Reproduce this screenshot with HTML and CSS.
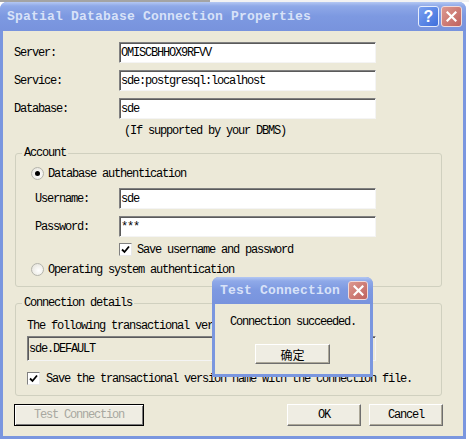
FILE: index.html
```html
<!DOCTYPE html>
<html lang="en">
<head>
    <meta charset="UTF-8">
    <meta name="viewport" content="width=device-width, initial-scale=1.0">
    <title>Spatial Database Connection Properties</title>
    <link rel="stylesheet" href="styles.css">
</head>
<body>
    <div class="desk-top"></div>
    <div class="window">
        <div class="titlebar">
            <span class="title">Spatial Database Connection Properties</span>
            <span class="cap-btn help">?</span>
            <span class="cap-btn close">
                <svg width="11" height="11" viewBox="0 0 11 11"><path d="M1.5 1.5 L9.5 9.5 M9.5 1.5 L1.5 9.5" stroke="#fff" stroke-width="2.2" stroke-linecap="square"/></svg>
            </span>
        </div>
        <div class="client">
            <div class="form-grid">
                <label>Server:</label>
                <div class="field">OMISCBHHOX9RFVV</div>
                <label>Service:</label>
                <div class="field">sde:postgresql:localhost</div>
                <label>Database:</label>
                <div class="field">sde</div>
            </div>
            <p class="hint">(If supported by your DBMS)</p>

            <fieldset class="group account">
                <legend>Account</legend>
                <div class="radio-row"><span class="radio checked"></span>Database authentication</div>
                <div class="form-grid sub">
                    <label>Username:</label>
                    <div class="field">sde</div>
                    <label>Password:</label>
                    <div class="field">***</div>
                </div>
                <div class="check-row save-user">
                    <span class="check"><svg width="9" height="9" viewBox="0 0 9 9"><path d="M1 4.5 L3.5 7 L8 1.5" fill="none" stroke="#000" stroke-width="1.8"/></svg></span>
                    Save username and password
                </div>
                <div class="radio-row second"><span class="radio"></span>Operating system authentication</div>
            </fieldset>

            <fieldset class="group details">
                <legend>Connection details</legend>
                <div class="info">The following transactional version will be used:</div>
                <div class="field readonly">sde.DEFAULT</div>
                <div class="check-row save-version">
                    <span class="check"><svg width="9" height="9" viewBox="0 0 9 9"><path d="M1 4.5 L3.5 7 L8 1.5" fill="none" stroke="#000" stroke-width="1.8"/></svg></span>
                    Save the transactional version name with the connection file.
                </div>
            </fieldset>

            <div class="buttons">
                <span class="btn default disabled">Test Connection</span>
                <span class="btn ok">OK</span>
                <span class="btn">Cancel</span>
            </div>
        </div>

        <div class="msgbox">
            <div class="msg-title">
                <span class="title">Test Connection</span>
                <span class="cap-btn close small">
                    <svg width="11" height="11" viewBox="0 0 11 11"><path d="M1.5 1.5 L9.5 9.5 M9.5 1.5 L1.5 9.5" stroke="#fff" stroke-width="2.2" stroke-linecap="square"/></svg>
                </span>
            </div>
            <div class="msg-body">
                <p class="msg-text">Connection succeeded.</p>
                <span class="btn msg-btn">确定</span>
            </div>
        </div>
    </div>
</body>
</html>
```

FILE: styles.css
```css
body {
    margin: 0;
    background: #fff;
    font-family: "Liberation Mono", monospace;
    font-size: 12px;
    letter-spacing: -1.2px;
    color: #000;
}
.desk-top {
    height: 2px;
    background: linear-gradient(to right, #a4a4a4 0, #a4a4a4 210px, #f2f2f2 210px);
}
.window {
    position: relative;
    width: 466px;
    box-sizing: border-box;
    padding: 0 3px 3px;
    background: #7a96df;
    border-radius: 7px 7px 0 0;
}
.titlebar {
    display: flex;
    align-items: center;
    height: 29px;
    margin: 0 -3px;
    padding: 0 4px 0 7px;
    background: linear-gradient(#b4c8f3, #8fa9e8 4px, #7d99e1 14px, #7893dd);
    border-radius: 7px 7px 0 0;
}
.title {
    flex: 1;
    font-weight: bold;
    font-size: 13px;
    letter-spacing: 0.2px;
    color: #d8e2f8;
}
.cap-btn {
    display: flex;
    align-items: center;
    justify-content: center;
    width: 21px;
    height: 21px;
    box-sizing: border-box;
    margin-left: 2px;
    border: 1px solid #e6ecfb;
    border-radius: 3px;
}
.help {
    background: linear-gradient(135deg, #7aa0f0, #3f6fdc);
    color: #fff;
    font-family: "Liberation Sans", sans-serif;
    font-weight: bold;
    font-size: 16px;
    letter-spacing: 0;
}
.close {
    background: linear-gradient(135deg, #dc9890, #c0625d);
    border-color: #f0d8d8;
}
.client {
    height: 405px;
    box-sizing: border-box;
    padding: 11px 20px 0 11px;
    background: #ece9d8;
}
.form-grid {
    display: grid;
    grid-template-columns: 105px 257px;
    grid-auto-rows: 21px;
    row-gap: 7px;
    align-items: center;
}
.form-grid.sub {
    grid-template-columns: 84px 257px;
    margin: 8px 0 0 19px;
}
.field {
    display: flex;
    align-items: center;
    height: 21px;
    box-sizing: border-box;
    padding-left: 1px;
    background: #fff;
    border: 1px solid;
    border-color: #808080 #f4f4f4 #f4f4f4 #808080;
    box-shadow: inset 1px 1px #5a5a5a;
}
.hint {
    margin: 6px 0 0 110px;
    line-height: 12px;
}
.group {
    width: 427px;
    box-sizing: border-box;
    margin: 10px 0 0 1px;
    padding: 8px 0 10px;
    border: 1px solid #d0d0bf;
    border-radius: 3px;
}
.group legend {
    margin-left: 6px;
    padding: 0 2px;
    line-height: 12px;
}
.details {
    padding-top: 11px;
}
.radio-row,
.check-row {
    display: flex;
    align-items: center;
    height: 13px;
    gap: 4px;
    margin-left: 15px;
}
.radio-row.second {
    margin-top: 7px;
}
.radio {
    position: relative;
    width: 13px;
    height: 13px;
    box-sizing: border-box;
    border: 1px solid #b4b4ac;
    border-radius: 50%;
    background: radial-gradient(circle at 60% 60%, #fff, #e2e0d6);
}
.radio.checked::after {
    content: "";
    position: absolute;
    left: 3px;
    top: 3px;
    width: 5px;
    height: 5px;
    border-radius: 50%;
    background: #000;
}
.check {
    display: flex;
    align-items: center;
    justify-content: center;
    width: 13px;
    height: 13px;
    box-sizing: border-box;
    background: #fff;
    border: 1px solid;
    border-color: #808080 #e8e8e8 #e8e8e8 #808080;
}
.save-user {
    margin: 6px 0 0 103px;
    gap: 5px;
}
.info {
    margin-left: 11px;
    line-height: 12px;
}
.field.readonly {
    width: 349px;
    height: 25px;
    margin: 4px 0 0 11px;
    background: #ece9d8;
}
.save-version {
    margin: 11px 0 0 11px;
    gap: 6px;
}
.buttons {
    display: flex;
    gap: 8px;
    margin-top: 8px;
}
.btn {
    display: flex;
    align-items: center;
    justify-content: center;
    width: 74px;
    height: 22px;
    box-sizing: border-box;
    background: #efede3;
    border: 1px solid;
    border-color: #fff #6e6e6e #6e6e6e #fff;
    box-shadow: inset -1px -1px #aca899;
}
.btn.default {
    width: 130px;
    border-color: #000;
    box-shadow: inset 1px 1px #fff, inset -1px -1px #7a7a7a;
}
.btn.disabled {
    color: #a8a8a0;
}
.btn.ok {
    margin-left: auto;
}
.msgbox {
    position: absolute;
    left: 212px;
    top: 275px;
    width: 161px;
    height: 100px;
    box-sizing: border-box;
    padding: 0 3px 3px;
    background: #7a96df;
    border-radius: 7px 7px 0 0;
}
.msg-title {
    display: flex;
    align-items: center;
    height: 27px;
    margin: 0 -3px;
    padding: 0 5px 0 8px;
    background: linear-gradient(#b4c8f3, #8fa9e8 4px, #7d99e1 13px, #7893dd);
    border-radius: 7px 7px 0 0;
}
.cap-btn.small {
    width: 20px;
    height: 19px;
}
.msg-body {
    height: 70px;
    box-sizing: border-box;
    padding-top: 12px;
    background: #ece9d8;
}
.msg-text {
    margin: 0 0 0 15px;
    line-height: 12px;
}
.msg-btn {
    width: 75px;
    height: 20px;
    margin: 16px auto 0;
    font-family: "Noto Sans CJK SC", sans-serif;
    font-size: 12px;
    letter-spacing: 0;
}
```
